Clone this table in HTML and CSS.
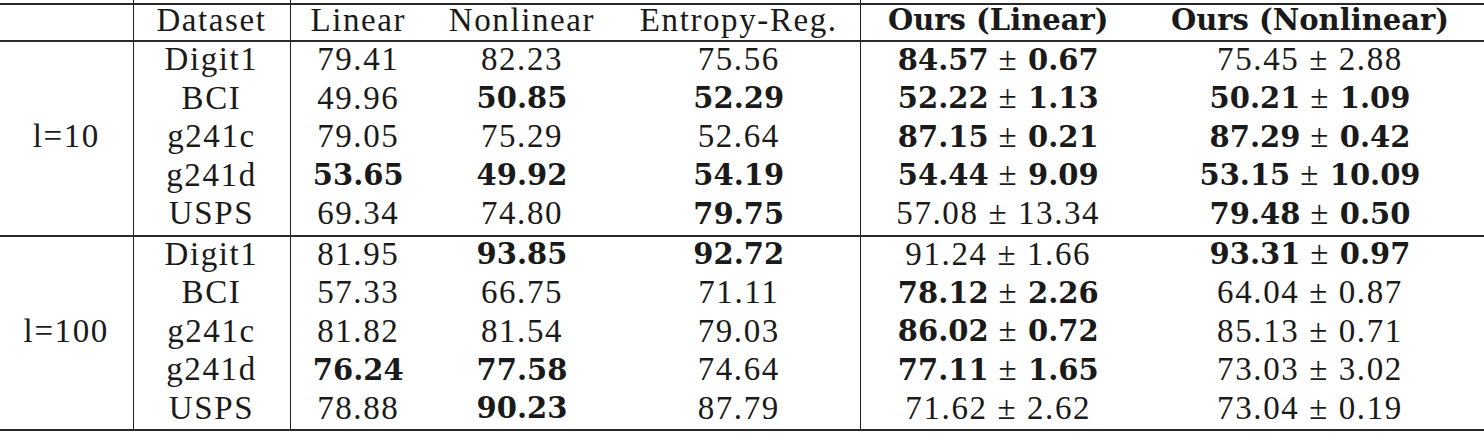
FILE: index.html
```html
<!DOCTYPE html>
<html lang="en">
<head>
  <meta charset="UTF-8">
  <title>Results</title>
  <link rel="stylesheet" href="styles.css">
</head>
<body>
  <table class="results">
    <colgroup>
      <col class="c-group">
      <col class="c-data">
      <col class="c-lin">
      <col class="c-nonlin">
      <col class="c-ent">
      <col class="c-ours-lin">
      <col class="c-ours-nonlin">
    </colgroup>
    <thead>
      <tr>
        <th class="sep"></th>
        <th class="sep">Dataset</th>
        <th>Linear</th>
        <th>Nonlinear</th>
        <th class="sep">Entropy-Reg.</th>
        <th><b>Ours (Linear)</b></th>
        <th><b>Ours (Nonlinear)</b></th>
      </tr>
    </thead>
    <tbody>
      <tr>
        <td class="sep" rowspan="5">l=10</td>
        <td class="sep">Digit1</td>
        <td>79.41</td>
        <td>82.23</td>
        <td class="sep">75.56</td>
        <td><b>84.57</b> ± <b>0.67</b></td>
        <td>75.45 ± 2.88</td>
      </tr>
      <tr>
        <td class="sep">BCI</td>
        <td>49.96</td>
        <td><b>50.85</b></td>
        <td class="sep"><b>52.29</b></td>
        <td><b>52.22</b> ± <b>1.13</b></td>
        <td><b>50.21</b> ± <b>1.09</b></td>
      </tr>
      <tr>
        <td class="sep">g241c</td>
        <td>79.05</td>
        <td>75.29</td>
        <td class="sep">52.64</td>
        <td><b>87.15</b> ± <b>0.21</b></td>
        <td><b>87.29</b> ± <b>0.42</b></td>
      </tr>
      <tr>
        <td class="sep">g241d</td>
        <td><b>53.65</b></td>
        <td><b>49.92</b></td>
        <td class="sep"><b>54.19</b></td>
        <td><b>54.44</b> ± <b>9.09</b></td>
        <td><b>53.15</b> ± <b>10.09</b></td>
      </tr>
      <tr>
        <td class="sep">USPS</td>
        <td>69.34</td>
        <td>74.80</td>
        <td class="sep"><b>79.75</b></td>
        <td>57.08 ± 13.34</td>
        <td><b>79.48</b> ± <b>0.50</b></td>
      </tr>
    </tbody>
    <tbody>
      <tr>
        <td class="sep" rowspan="5">l=100</td>
        <td class="sep">Digit1</td>
        <td>81.95</td>
        <td><b>93.85</b></td>
        <td class="sep"><b>92.72</b></td>
        <td>91.24 ± 1.66</td>
        <td><b>93.31</b> ± <b>0.97</b></td>
      </tr>
      <tr>
        <td class="sep">BCI</td>
        <td>57.33</td>
        <td>66.75</td>
        <td class="sep">71.11</td>
        <td><b>78.12</b> ± <b>2.26</b></td>
        <td>64.04 ± 0.87</td>
      </tr>
      <tr>
        <td class="sep">g241c</td>
        <td>81.82</td>
        <td>81.54</td>
        <td class="sep">79.03</td>
        <td><b>86.02</b> ± <b>0.72</b></td>
        <td>85.13 ± 0.71</td>
      </tr>
      <tr>
        <td class="sep">g241d</td>
        <td><b>76.24</b></td>
        <td><b>77.58</b></td>
        <td class="sep">74.64</td>
        <td><b>77.11</b> ± <b>1.65</b></td>
        <td>73.03 ± 3.02</td>
      </tr>
      <tr>
        <td class="sep">USPS</td>
        <td>78.88</td>
        <td><b>90.23</b></td>
        <td class="sep">87.79</td>
        <td>71.62 ± 2.62</td>
        <td>73.04 ± 0.19</td>
      </tr>
    </tbody>
  </table>
</body>
</html>
```

FILE: styles.css
```css
body {
  margin: 0;
  background-color: white;
  color: #1a1a1a;
  font-family: 'Liberation Serif', serif;
}

.results {
  width: 1484px;
  table-layout: fixed;
  border-collapse: collapse;
  font-size: 33px;
  letter-spacing: 1.6px;
}

.c-group { width: 133px; }
.c-data { width: 157px; }
.c-lin { width: 136px; }
.c-nonlin { width: 192px; }
.c-ent { width: 242px; }
.c-ours-lin { width: 276px; }
.c-ours-nonlin { width: 348px; }

.results th,
.results td {
  padding: 0 0 4px;
  height: 34.5px;
  line-height: 28px;
  text-align: center;
  vertical-align: middle;
  font-weight: normal;
  white-space: nowrap;
  overflow: hidden;
}

/* the top rule is drawn inside the header cells */
.results th {
  height: 33px;
  padding-top: 3px;
  box-shadow: inset 0 3px 0 white, inset 0 5px 0 #2a2a2a;
}

.results thead tr {
  border-bottom: 2px solid #2a2a2a;
}

.results tbody + tbody tr:first-child {
  border-top: 2px solid #2a2a2a;
}

.results tbody:last-child tr:last-child {
  border-bottom: 2px solid #2a2a2a;
}

.results .sep {
  border-right: 1px solid #222;
}

.results b {
  font-family: 'DejaVu Serif', serif;
  font-size: 29px;
  line-height: 28px;
  font-weight: bold;
  letter-spacing: 0;
}
```
